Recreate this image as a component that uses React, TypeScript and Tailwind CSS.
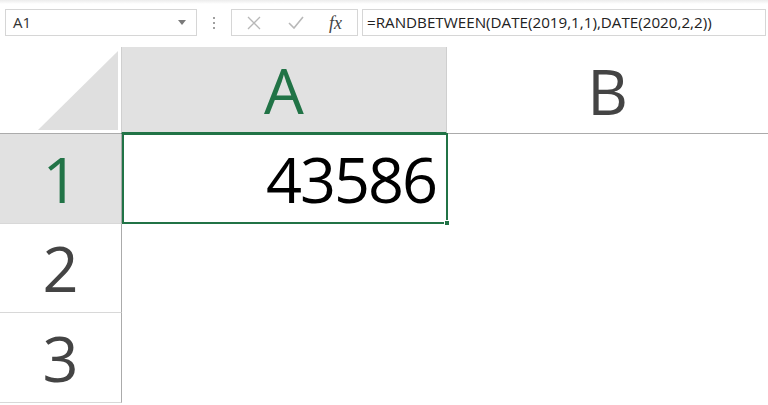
import React from "react";

const headFont = { fontFamily: '"Open Sans", "Noto Sans", sans-serif' };

function Toolbar() {
  return (
    <div className="h-[47px] bg-white">
      <div className="h-[4px] bg-gradient-to-b from-[#ececec] to-white" />
      <div className="flex items-start pt-[5px]">
        <div className="ml-[5px] flex h-[27px] w-[192px] items-center justify-between border border-[#d6d6d6] bg-white pl-[7px] pr-[10px]">
          <span className="text-[15px] text-[#333]" style={headFont}>A1</span>
          <svg width="8" height="5" viewBox="0 0 8 5"><path d="M0 0h8L4 5z" fill="#7a7a7a" /></svg>
        </div>
        <div className="flex h-[27px] w-[34px] flex-col items-center justify-center gap-[3px]">
          <span className="h-[2px] w-[2px] bg-[#a0a0a0]" />
          <span className="h-[2px] w-[2px] bg-[#a0a0a0]" />
          <span className="h-[2px] w-[2px] bg-[#a0a0a0]" />
        </div>
        <div className="flex h-[27px] w-[127px] items-center border border-[#d6d6d6] bg-white">
          <svg className="ml-[15px]" width="14" height="14" viewBox="0 0 14 14">
            <path d="M1 1L13 13M13 1L1 13" stroke="#b8b8b8" strokeWidth="1.3" fill="none" />
          </svg>
          <svg className="ml-[27px]" width="16" height="13" viewBox="0 0 16 13">
            <path d="M1 7L6 12L15 1" stroke="#b8b8b8" strokeWidth="1.6" fill="none" />
          </svg>
          <span className="ml-[25px] text-[18px] italic leading-none text-[#444]" style={{ fontFamily: '"Liberation Serif", serif' }}>fx</span>
        </div>
        <div className="ml-[4px] flex h-[27px] w-[404px] items-center border border-[#d6d6d6] bg-white pl-[4px]">
          <span className="text-[15.2px] text-[#222]" style={headFont}>=RANDBETWEEN(DATE(2019,1,1),DATE(2020,2,2))</span>
        </div>
      </div>
    </div>
  );
}

function RowHead({ n, active }: { n: number; active?: boolean }) {
  return (
    <div
      className={
        "flex h-[89.5px] w-[122px] items-center justify-center border-b border-r border-b-[#d8d8d8] border-r-[#ababab] text-[63px] leading-none " +
        (active ? "bg-[#e1e1e1] text-[#217346]" : "bg-white text-[#444]")
      }
      style={headFont}
    >
      {n}
    </div>
  );
}

export default function App() {
  return (
    <div className="h-[405px] w-[768px] overflow-hidden bg-white">
      <Toolbar />
      <div className="flex h-[87px]">
        <div className="flex w-[121px] items-end justify-end border-b border-[#ababab] pb-[3px] pr-[3px]">
          <svg width="80" height="79" viewBox="0 0 80 79"><path d="M80 0V79H0z" fill="#dfdfdf" /></svg>
        </div>
        <div className="flex w-[326px] items-center justify-center border-b-2 border-l border-r border-b-[#217346] border-l-[#cfcfcf] border-r-[#cfcfcf] bg-[#e1e1e1] text-[63px] leading-none text-[#217346]" style={headFont}>
          A
        </div>
        <div className="flex flex-1 items-center justify-center border-b border-[#ababab] text-[63px] leading-none text-[#444]" style={headFont}>
          B
        </div>
      </div>
      <div className="flex">
        <div className="flex flex-col">
          <RowHead n={1} active />
          <RowHead n={2} />
          <RowHead n={3} />
        </div>
        <div className="flex-1">
          <div className="relative -mt-[1px] h-[91px] w-[326px] border-2 border-[#217346]">
            <div className="flex h-full items-center justify-end pr-[10px] text-[63px] leading-none tracking-[-2px] text-black" style={headFont}>
              43586
            </div>
            <div className="absolute -bottom-[4px] -right-[4px] h-[6px] w-[6px] border border-white bg-[#217346]" />
          </div>
        </div>
      </div>
    </div>
  );
}
